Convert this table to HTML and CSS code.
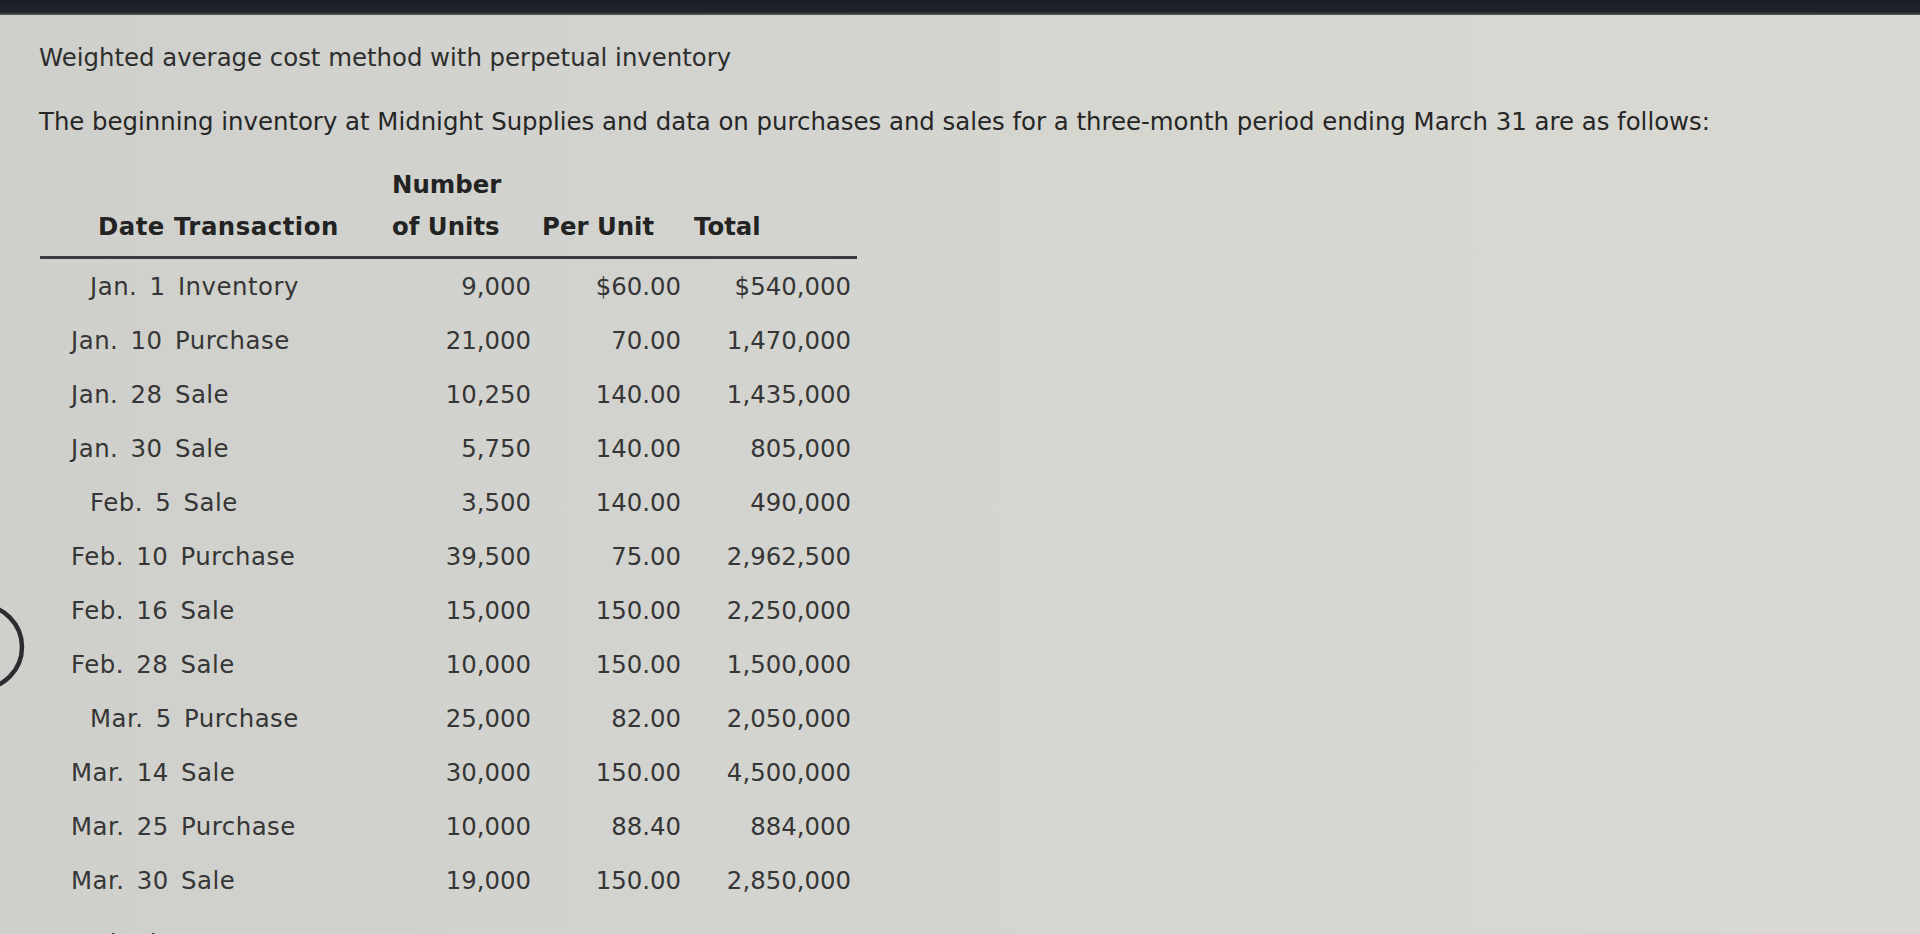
FILE: index.html
```html
<!DOCTYPE html>
<html lang="en">
<head>
<meta charset="utf-8">
<title>Weighted average cost method with perpetual inventory</title>
<link rel="stylesheet" href="styles.css">
</head>
<body>
<div class="topbar"></div>
<main class="content">
  <h1 class="title">Weighted average cost method with perpetual inventory</h1>
  <p class="intro">The beginning inventory at Midnight Supplies and data on purchases and sales for a three-month period ending March 31 are as follows:</p>
  <table class="inv">
    <colgroup>
      <col class="c-date">
      <col class="c-units">
      <col class="c-unit">
      <col class="c-total">
    </colgroup>
    <thead>
      <tr class="h1row">
        <th></th>
        <th class="hu">Number</th>
        <th></th>
        <th></th>
      </tr>
      <tr class="h2row">
        <th class="hdate">Date Transaction</th>
        <th class="hu">of Units</th>
        <th class="hp">Per Unit</th>
        <th class="ht">Total</th>
      </tr>
    </thead>
    <tbody>
      <tr><td class="lbl ind">Jan. 1 Inventory</td><td class="num">9,000</td><td class="num">$60.00</td><td class="num">$540,000</td></tr>
      <tr><td class="lbl">Jan. 10 Purchase</td><td class="num">21,000</td><td class="num">70.00</td><td class="num">1,470,000</td></tr>
      <tr><td class="lbl">Jan. 28 Sale</td><td class="num">10,250</td><td class="num">140.00</td><td class="num">1,435,000</td></tr>
      <tr><td class="lbl">Jan. 30 Sale</td><td class="num">5,750</td><td class="num">140.00</td><td class="num">805,000</td></tr>
      <tr><td class="lbl ind">Feb. 5 Sale</td><td class="num">3,500</td><td class="num">140.00</td><td class="num">490,000</td></tr>
      <tr><td class="lbl">Feb. 10 Purchase</td><td class="num">39,500</td><td class="num">75.00</td><td class="num">2,962,500</td></tr>
      <tr><td class="lbl">Feb. 16 Sale</td><td class="num">15,000</td><td class="num">150.00</td><td class="num">2,250,000</td></tr>
      <tr><td class="lbl">Feb. 28 Sale</td><td class="num">10,000</td><td class="num">150.00</td><td class="num">1,500,000</td></tr>
      <tr><td class="lbl ind">Mar. 5 Purchase</td><td class="num">25,000</td><td class="num">82.00</td><td class="num">2,050,000</td></tr>
      <tr><td class="lbl">Mar. 14 Sale</td><td class="num">30,000</td><td class="num">150.00</td><td class="num">4,500,000</td></tr>
      <tr><td class="lbl">Mar. 25 Purchase</td><td class="num">10,000</td><td class="num">88.40</td><td class="num">884,000</td></tr>
      <tr><td class="lbl">Mar. 30 Sale</td><td class="num">19,000</td><td class="num">150.00</td><td class="num">2,850,000</td></tr>
    </tbody>
  </table>
  <p class="required">Required:</p>
</main>
<svg class="navarc" width="30" height="100" viewBox="0 0 30 100" aria-hidden="true">
  <circle cx="-20" cy="47" r="42" fill="none" stroke="#2b2d31" stroke-width="4.5"/>
</svg>
</body>
</html>
```

FILE: styles.css
```css
html, body {
  margin: 0;
  padding: 0;
  height: 934px;
  overflow: hidden;
}

body {
  background: linear-gradient(90deg, #cfd0cb 0%, #d3d4cf 40%, #d7d7d1 70%, #d9d8d2 100%);
  font-family: "DejaVu Sans", Verdana, sans-serif;
  color: #2c2c2c;
  position: relative;
}

.topbar {
  height: 15px;
  background: linear-gradient(180deg, #1a1d24 0%, #1f232b 80%, #5a5c60 100%);
}

.content {
  padding-left: 39px;
}

.title {
  margin: 27px 0 0 0;
  font-size: 24.4px;
  font-weight: normal;
  line-height: 31px;
  color: #2e2e2e;
}

.intro {
  margin: 33px 0 0 0;
  font-size: 24.4px;
  line-height: 31px;
  color: #262626;
  white-space: nowrap;
}

.inv {
  margin-top: 26px;
  margin-left: 1px;
  border-collapse: collapse;
  table-layout: fixed;
  width: 817px;
  font-size: 24.4px;
}

.c-date { width: 340px; }
.c-units { width: 151px; }
.c-unit { width: 150px; }
.c-total { width: 176px; }

.inv th {
  font-weight: bold;
  color: #232323;
  padding: 0;
  text-align: left;
  white-space: nowrap;
}

.h1row th {
  height: 42px;
}

.h2row th {
  height: 42px;
  padding-bottom: 9px;
  border-bottom: 3px solid #3a3b3c;
}

.inv th.hdate {
  padding-left: 58px;
  letter-spacing: 0.5px;
}
.inv th.hu { padding-left: 12px; }
.inv th.hp { padding-left: 11px; }
.inv th.ht { padding-left: 13px; }

.inv td {
  height: 54px;
  padding: 0;
  color: #363636;
  white-space: nowrap;
}

.inv td.lbl {
  padding-left: 31px;
  letter-spacing: 0.5px;
  word-spacing: 4px;
}
.inv td.lbl.ind { padding-left: 50px; }

.inv td.num { text-align: right; }

.inv tbody tr td:last-child { padding-right: 6px; }

.required {
  margin: 21px 0 0 9px;
  font-size: 24.4px;
  line-height: 31px;
  color: #2a2a2a;
}

.navarc {
  position: absolute;
  left: 0;
  top: 600px;
}
```
